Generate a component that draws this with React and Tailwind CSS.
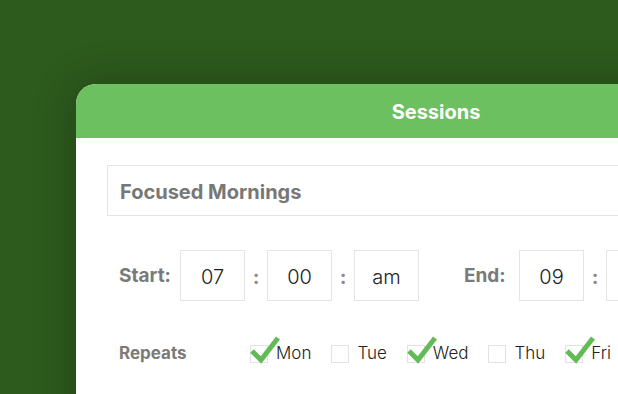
import React from 'react';

const days = [
  { name: 'Mon', checked: true },
  { name: 'Tue', checked: false },
  { name: 'Wed', checked: true },
  { name: 'Thu', checked: false },
  { name: 'Fri', checked: true },
];

const TimeBox = ({ value }) => (
  <div className="flex h-[51px] w-[65px] shrink-0 items-center justify-center border border-[#e4e4e4] pt-[2px] text-[20px] font-light text-[#222222]">
    {value}
  </div>
);

const Colon = () => (
  <div className="flex w-[22px] shrink-0 justify-center pt-[2px] text-[20px] font-bold text-[#8a8a8a]">
    :
  </div>
);

const Check = () => (
  <svg
    className="absolute left-[-1px] top-[-10px] h-[30px] w-[30px]"
    viewBox="0 0 30 30"
    fill="none"
  >
    <path
      d="M2 15 L11 24 L28 2"
      stroke="#63bb58"
      strokeWidth="5"
    />
  </svg>
);

const Day = ({ name, checked }) => (
  <div className="flex shrink-0 items-center">
    <div className="relative h-[18px] w-[18px] border border-[#e2e2e2]">
      {checked && <Check />}
    </div>
    <span className="ml-[8px] text-[17px] font-light text-[#222222]">{name}</span>
  </div>
);

export default function App() {
  return (
    <div
      className="h-[394px] w-[618px] overflow-hidden bg-[#2d5a1d] pl-[76px] pt-[84px]"
      style={{ fontFamily: 'Inter, Lato, sans-serif' }}
    >
      <div className="h-[400px] w-[720px] overflow-hidden rounded-t-[20px] bg-white shadow-[0_0_40px_rgba(0,0,0,0.25)]">
        {/* HEADER */}
        <div className="flex h-[54px] items-center justify-center bg-[#6cc05f] pt-[2px] text-[20px] font-bold text-white">
          Sessions
        </div>

        <div className="px-[31px]">
          {/* NAME INPUT */}
          <div className="mt-[27px] flex h-[51px] items-center border border-[#e4e4e4] px-[12px] pt-[3px] text-[20px] font-bold text-[#777777]">
            Focused Mornings
          </div>

          {/* TIME ROW */}
          <div className="mt-[34px] flex items-center pl-[12px]">
            <span className="w-[61px] shrink-0 pt-[2px] text-[19px] font-bold text-[#7a7a7a]">
              Start:
            </span>
            <TimeBox value="07" />
            <Colon />
            <TimeBox value="00" />
            <Colon />
            <TimeBox value="am" />
            <span className="ml-[45px] w-[55px] shrink-0 pt-[2px] text-[19px] font-bold text-[#7a7a7a]">
              End:
            </span>
            <TimeBox value="09" />
            <Colon />
            <TimeBox value="00" />
          </div>

          {/* REPEATS ROW */}
          <div className="mt-[40px] flex items-center pl-[12px]">
            <span className="w-[131px] shrink-0 text-[17px] font-bold text-[#7a7a7a]">
              Repeats
            </span>
            <div className="flex items-center gap-[20px]">
              {days.map((d) => (
                <Day key={d.name} name={d.name} checked={d.checked} />
              ))}
            </div>
          </div>
        </div>
      </div>
    </div>
  );
}
